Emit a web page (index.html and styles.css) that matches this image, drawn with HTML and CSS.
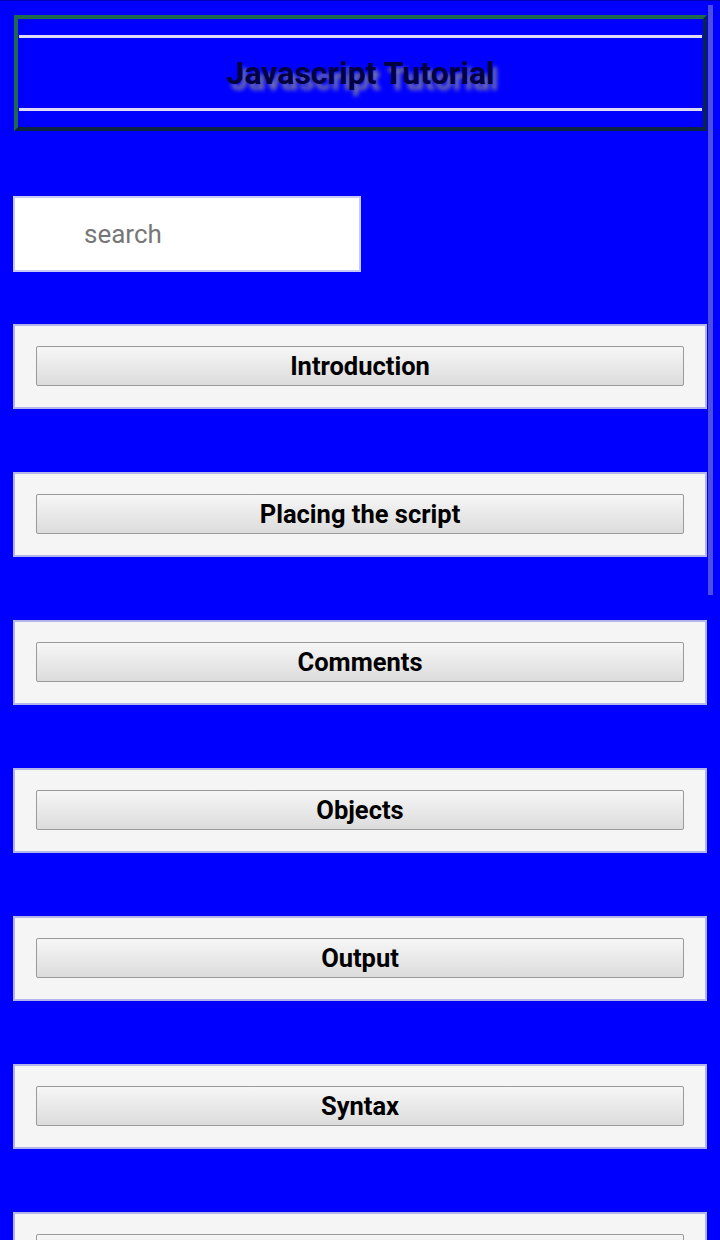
FILE: index.html
```html
<!DOCTYPE html>
<html>
<head>
<meta charset="utf-8">
<link rel="stylesheet" href="styles.css">
</head>
<body>
<div class="page">
  <header class="banner">
    <div class="rule"></div>
    <h1 class="title">Javascript Tutorial</h1>
    <div class="rule"></div>
  </header>
  <div class="search-row">
    <input class="search" type="text" placeholder="search">
  </div>
  <ul class="topics">
    <li class="card"><button class="btn">Introduction</button></li>
    <li class="card"><button class="btn">Placing the script</button></li>
    <li class="card"><button class="btn">Comments</button></li>
    <li class="card"><button class="btn">Objects</button></li>
    <li class="card"><button class="btn">Output</button></li>
    <li class="card"><button class="btn">Syntax</button></li>
    <li class="card"><button class="btn"></button></li>
  </ul>
</div>
<div class="scrollbar"></div>
</body>
</html>
```
FILE: styles.css
```css
html, body {
  margin: 0;
  padding: 0;
}
body {
  background: #0000ff;
  font-family: Roboto, "Liberation Sans", sans-serif;
  border-top: 1px solid #0000b4;
  height: 1240px;
  overflow: hidden;
  box-sizing: border-box;
}
.page {
  padding: 14px 13px 0 13px;
}
.banner {
  margin-left: 1px;
  border: 4px solid;
  border-color: #1d6a4c #0b2444 #0b2444 #1d6a4c;
  padding: 16px 0;
}
.rule {
  height: 3px;
  background: #dcdcf6;
  margin: 0 1px;
}
.title {
  margin: 0;
  height: 70px;
  display: flex;
  align-items: center;
  justify-content: center;
  font-size: 32px;
  font-weight: 700;
  color: #000040;
  text-shadow: 4px 6px 4px rgba(140,140,150,0.85);
}
.search-row {
  margin-top: 65px;
}
.search {
  display: block;
  width: 348px;
  height: 76px;
  box-sizing: border-box;
  border: 2px solid #c8c8f4;
  background: #fff;
  padding: 0 0 0 69px;
  font-family: Roboto, "Liberation Sans", sans-serif;
  font-size: 26px;
  outline: none;
}
.search::placeholder {
  color: #777;
}
.topics {
  list-style: none;
  margin: 52px 0 0 0;
  padding: 0;
  display: flex;
  flex-direction: column;
  gap: 63px;
}
.card {
  background: #f5f5f5;
  border: 2px solid #b4b4ec;
  height: 85px;
  box-sizing: border-box;
  padding: 20px 21px 0 21px;
}
.btn {
  display: block;
  width: 100%;
  height: 40px;
  border: 1px solid #9a9a9a;
  border-radius: 2px;
  background: linear-gradient(#f6f6f6, #dcdcdc);
  font-family: Roboto, "Liberation Sans", sans-serif;
  font-size: 25.5px;
  font-weight: 700;
  color: #000;
  padding: 0;
}
.scrollbar {
  position: absolute;
  top: 5px;
  left: 708px;
  width: 5px;
  height: 590px;
  background: #4c4ce6;
}
```
